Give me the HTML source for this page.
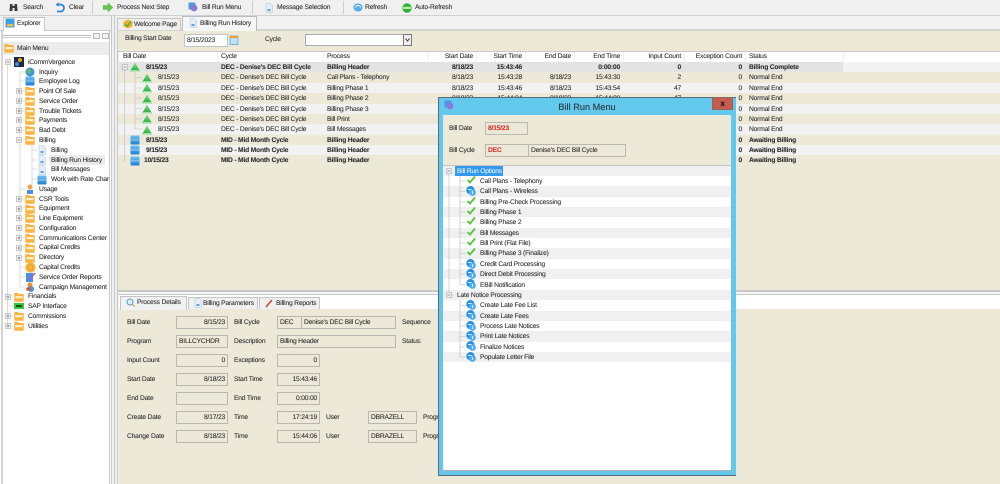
<!DOCTYPE html>
<html><head><meta charset="utf-8"><title>Bill Run History</title>
<style>
html,body{margin:0;padding:0;background:#f0f0f0}
#p{position:relative;width:1000px;height:484px;overflow:hidden;background:#f0f0f0;font-family:"Liberation Sans",sans-serif;font-size:6.7px;letter-spacing:-.19px;color:#2c2c2c;text-rendering:geometricPrecision;text-shadow:0 0 .4px rgba(40,40,40,.35)}
#p div,#p svg.i{position:absolute}
.t{line-height:10px;height:10px;white-space:nowrap;margin-top:1px}
.b{font-weight:bold}
.bx{background:#ece9d8;box-sizing:border-box;border:1px solid #b9b8b0;height:13px;line-height:11px;padding:0 2px;white-space:nowrap}
.rt{text-align:right}
.r{left:0;width:1000px;height:10.38px;line-height:10.38px;white-space:nowrap;clip-path:inset(0 0 0 118px)}
.r span{position:absolute;top:1px}
.o{background:#ece9d8}.w{background:#f2f2f2}
.ca{left:221px}.cb{left:327px}.cc{right:527px}.cd{right:478px}.ce{right:429px}.cf{right:380px}.cg{right:319px}.ch{right:258px}.ci{left:749px}
.hd{top:52px;height:10px;line-height:10px;background:#fff;margin-top:0}
.tab{background:#f0f0f0;border:1px solid #c4c4c4;border-bottom:0;box-sizing:border-box}
.m{left:443px;width:288px;height:10.35px;line-height:10.35px;white-space:nowrap}
.g{background:#f0f0f0}
.m span{position:absolute;left:37px;top:1px}
</style></head><body><div id="p">
<svg width="0" height="0" style="position:absolute"><defs>
<linearGradient id="gt" x1="0" y1="0" x2="0" y2="1"><stop offset="0" stop-color="#8fe08f"/><stop offset="1" stop-color="#27b042"/></linearGradient>
<linearGradient id="gb" x1="0" y1="0" x2="0" y2="1"><stop offset="0" stop-color="#6fc0f5"/><stop offset="1" stop-color="#1f7fd0"/></linearGradient>
<symbol id="tri" viewBox="0 0 10 10"><path d="M5 .5 9.500 8.500H.5Z" fill="url(#gt)"/><rect x="0" y="8" width="10" height="1.500" fill="#9adf9a"/></symbol>
<symbol id="sq" viewBox="0 0 10 10"><rect x=".5" y=".5" width="9" height="9" rx="1" fill="url(#gb)"/><path d="M1 5h8" stroke="#bfe3fb" stroke-width=".7"/></symbol>
<symbol id="chk" viewBox="0 0 10 10"><path d="M1.500 5 4 7.500 9 1.500" fill="none" stroke="#56c43c" stroke-width="1.900"/></symbol>
<symbol id="gr" viewBox="0 0 10 10"><circle cx="4.500" cy="4.200" r="4.200" fill="#2a90e0"/><circle cx="6.500" cy="6.500" r="3.400" fill="#52aef0"/><path d="M2 3.500h3.500M6.500 5v3" stroke="#d8f0ff" stroke-width="1"/></symbol>
<symbol id="fo" viewBox="0 0 10 10"><path d="M.3 1h3.700l1 1h4.700v7.700H.3Z" fill="#f8b444"/><rect x="1.500" y="4" width="7" height="2.200" fill="#fff0c8"/></symbol>
<symbol id="do" viewBox="0 0 10 10"><path d="M2 .5h4.500L8.500 2.500v7H2Z" fill="#e4eef8" stroke="#b0c4d8" stroke-width=".5"/><rect x="3.500" y="6" width="3" height="2" fill="#5aa4e4"/></symbol>
<symbol id="pl" viewBox="0 0 6 6"><rect x=".5" y=".5" width="5" height="5" fill="#f4f4f4" stroke="#aaa" stroke-width=".6"/><path d="M1.500 3h3M3 1.500v3" stroke="#555" stroke-width=".6"/></symbol>
<symbol id="mi" viewBox="0 0 6 6"><rect x=".5" y=".5" width="5" height="5" fill="#f4f4f4" stroke="#aaa" stroke-width=".6"/><path d="M1.500 3h3" stroke="#555" stroke-width=".6"/></symbol>
</defs></svg>

<!-- toolbar -->
<div style="left:0;top:15px;width:1000px;height:1px;background:#d0d0d0"></div>
<div style="left:92px;top:1px;width:1px;height:13px;background:#ccc"></div>
<div style="left:252px;top:1px;width:1px;height:13px;background:#ccc"></div>
<div style="left:343px;top:1px;width:1px;height:13px;background:#ccc"></div>
<svg class="i" style="left:9px;top:3px" width="9" height="9" viewBox="0 0 9 9"><path d="M1 1h2.500v7H0.500ZM5.500 1H8l.6 7H5.500ZM3.500 3h2v2h-2Z" fill="#3a3a3a"/></svg>
<div class="t" style="left:23px;top:2px">Search</div>
<svg class="i" style="left:55px;top:2px" width="10" height="11" viewBox="0 0 10 11"><path d="M3 2.500h2.500a3.400 3.400 0 0 1 0 7H2" fill="none" stroke="#2a86d8" stroke-width="1.800"/><path d="M3.600 .3v4.600L.6 2.600Z" fill="#2a86d8"/></svg>
<div class="t" style="left:69px;top:2px">Clear</div>
<svg class="i" style="left:103px;top:3px" width="10" height="9" viewBox="0 0 10 9"><path d="M0 2.500h5V0l5 4.500L5 9V6.500H0Z" fill="#62c84a" stroke="#4aa838" stroke-width=".4"/></svg>
<div class="t" style="left:117px;top:2px">Process Next Step</div>
<svg class="i" style="left:188px;top:2px" width="10" height="10" viewBox="0 0 10 10"><rect x=".5" y=".5" width="7" height="7" rx="1" fill="#4a9ae0"/><circle cx="6" cy="6" r="3.400" fill="#8a78d8"/></svg>
<div class="t" style="left:202px;top:2px">Bill Run Menu</div>
<svg class="i" style="left:264px;top:3px" width="10" height="10"><use href="#do"/></svg>
<div class="t" style="left:277px;top:2px">Message Selection</div>
<svg class="i" style="left:353px;top:3px" width="10" height="9" viewBox="0 0 10 9"><ellipse cx="5" cy="4.500" rx="4.600" ry="4" fill="#5aaee6"/><path d="M2.500 4.500a2.500 2 0 0 1 5 0" fill="none" stroke="#fff" stroke-width="1"/></svg>
<div class="t" style="left:365px;top:2px">Refresh</div>
<svg class="i" style="left:402px;top:3px" width="10" height="10" viewBox="0 0 10 10"><circle cx="5" cy="5" r="4.700" fill="#2cb434"/><rect x="1" y="3.800" width="8" height="2.200" fill="#b6eca8"/></svg>
<div class="t" style="left:415px;top:2px">Auto-Refresh</div>

<!-- left panel -->
<div style="left:0;top:30px;width:111px;height:454px;background:#fff"></div>
<div style="left:1px;top:30px;width:2px;height:454px;background:#d4d4d4"></div>
<div style="left:109px;top:30px;width:1px;height:454px;background:#c8c8c8"></div>
<div style="left:0;top:30px;width:111px;height:1px;background:#c8c8c8"></div>
<div style="left:3px;top:17px;width:42px;height:14px;background:#fff;border:1px solid #c8c8c8;border-bottom:0;box-sizing:border-box"></div>
<svg class="i" style="left:5px;top:18px" width="10" height="10" viewBox="0 0 10 10"><rect x=".5" y=".5" width="9" height="9" fill="#3fa0e4"/><path d="M2 6h6v2.500H2Z" fill="#f6b84b"/></svg>
<div class="t" style="left:17px;top:18px">Explorer</div>
<div style="left:3px;top:35px;width:88px;height:1px;background:#bbb"></div>
<div style="left:3px;top:37px;width:88px;height:1px;background:#ccc"></div>
<div style="left:93px;top:33px;width:7px;height:6px;border:1px solid #bbb;box-sizing:border-box;background:#f0f0f0"></div>
<div style="left:102px;top:33px;width:7px;height:6px;border:1px solid #bbb;box-sizing:border-box;background:#f0f0f0"></div>
<div style="left:3px;top:42px;width:106px;height:13px;background:#ececec"></div>
<svg class="i" style="left:4px;top:43px" width="10" height="10"><use href="#fo"/></svg>
<div class="t" style="left:17px;top:43px">Main Menu</div>

<svg class="i" style="left:0;top:55px" width="110" height="290" fill="none" stroke="#c4c4c4" stroke-width=".6">
<path d="M7.500 10V271M20 17V232M32 90V130M20 17h6M20 26h6M20 36h6M20 46h6M20 56h6M20 65h6M20 75h6M20 85h6M32 95h5M32 105h5M32 114h5M32 124h5M20 134h6M20 144h6M20 153h6M20 163h6M20 173h6M20 183h6M20 192h6M20 202h6M20 212h6M20 222h6M20 232h6M7.500 241h6M7.500 251h6M7.500 261h6M7.500 271h6"/>
</svg>
<svg class="i" style="left:5px;top:59px" width="6" height="6"><use href="#mi"/></svg>
<svg class="i" style="left:14px;top:57px" width="10" height="10" viewBox="0 0 10 10"><rect width="10" height="10" fill="#1c2a4a"/><circle cx="6" cy="3" r="2" fill="#f0a020"/><circle cx="3" cy="7" r="2" fill="#4a90d8"/></svg>
<div class="t" style="left:28px;top:56.500px">iCommVergence</div>

<svg class="i" style="left:25px;top:67px" width="10" height="10" viewBox="0 0 10 10"><circle cx="5" cy="5" r="4.500" fill="#3f9ad0"/><path d="M2 3 5 2 6 5 3 7Z" fill="#6cc04a"/></svg>
<div class="t" style="left:39px;top:66.500px">Inquiry</div>
<svg class="i" style="left:25px;top:76px" width="10" height="10"><use href="#sq"/></svg>
<div class="t" style="left:39px;top:76px">Employee Log</div>

<svg class="i" style="left:16px;top:88px" width="6" height="6"><use href="#pl"/></svg><svg class="i" style="left:25px;top:86px" width="10" height="10"><use href="#fo"/></svg><div class="t" style="left:39px;top:86px">Point Of Sale</div>
<svg class="i" style="left:16px;top:98px" width="6" height="6"><use href="#pl"/></svg><svg class="i" style="left:25px;top:96px" width="10" height="10"><use href="#fo"/></svg><div class="t" style="left:39px;top:95.500px">Service Order</div>
<svg class="i" style="left:16px;top:108px" width="6" height="6"><use href="#pl"/></svg><svg class="i" style="left:25px;top:106px" width="10" height="10"><use href="#fo"/></svg><div class="t" style="left:39px;top:105.500px">Trouble Tickets</div>
<svg class="i" style="left:16px;top:117px" width="6" height="6"><use href="#pl"/></svg><svg class="i" style="left:25px;top:115px" width="10" height="10"><use href="#fo"/></svg><div class="t" style="left:39px;top:115px">Payments</div>
<svg class="i" style="left:16px;top:127px" width="6" height="6"><use href="#pl"/></svg><svg class="i" style="left:25px;top:125px" width="10" height="10"><use href="#fo"/></svg><div class="t" style="left:39px;top:125px">Bad Debt</div>
<svg class="i" style="left:16px;top:137px" width="6" height="6"><use href="#mi"/></svg><svg class="i" style="left:25px;top:135px" width="10" height="10"><use href="#fo"/></svg><div class="t" style="left:39px;top:135px">Billing</div>
<svg class="i" style="left:37px;top:145px" width="10" height="10"><use href="#do"/></svg><div class="t" style="left:51px;top:144.500px">Billing</div>
<div style="left:49px;top:155px;width:56px;height:10px;background:#ececec"></div>
<svg class="i" style="left:37px;top:155px" width="10" height="10"><use href="#do"/></svg><div class="t" style="left:51px;top:154.500px">Billing Run History</div>
<svg class="i" style="left:37px;top:165px" width="10" height="10"><use href="#do"/></svg><div class="t" style="left:51px;top:164px">Bill Messages</div>
<svg class="i" style="left:37px;top:175px" width="10" height="10"><use href="#sq"/></svg><div class="t" style="left:51px;top:174px;width:58px;overflow:hidden">Work with Rate Changes</div>
<svg class="i" style="left:25px;top:184px" width="10" height="10" viewBox="0 0 10 10"><circle cx="5" cy="3" r="2.500" fill="#f0a040"/><path d="M2 6h6v4H2Z" fill="#4a90d8"/></svg><div class="t" style="left:39px;top:184px">Usage</div>
<svg class="i" style="left:16px;top:196px" width="6" height="6"><use href="#pl"/></svg><svg class="i" style="left:25px;top:194px" width="10" height="10"><use href="#fo"/></svg><div class="t" style="left:39px;top:193.500px">CSR Tools</div>
<svg class="i" style="left:16px;top:206px" width="6" height="6"><use href="#pl"/></svg><svg class="i" style="left:25px;top:204px" width="10" height="10"><use href="#fo"/></svg><div class="t" style="left:39px;top:203px">Equipment</div>
<svg class="i" style="left:16px;top:215px" width="6" height="6"><use href="#pl"/></svg><svg class="i" style="left:25px;top:213px" width="10" height="10"><use href="#fo"/></svg><div class="t" style="left:39px;top:213px">Line Equipment</div>
<svg class="i" style="left:16px;top:225px" width="6" height="6"><use href="#pl"/></svg><svg class="i" style="left:25px;top:223px" width="10" height="10"><use href="#fo"/></svg><div class="t" style="left:39px;top:222.500px">Configuration</div>
<svg class="i" style="left:16px;top:235px" width="6" height="6"><use href="#pl"/></svg><svg class="i" style="left:25px;top:233px" width="10" height="10"><use href="#fo"/></svg><div class="t" style="left:39px;top:232.500px">Communications Center</div>
<svg class="i" style="left:16px;top:245px" width="6" height="6"><use href="#pl"/></svg><svg class="i" style="left:25px;top:243px" width="10" height="10"><use href="#fo"/></svg><div class="t" style="left:39px;top:242px">Capital Credits</div>
<svg class="i" style="left:16px;top:255px" width="6" height="6"><use href="#pl"/></svg><svg class="i" style="left:25px;top:253px" width="10" height="10"><use href="#fo"/></svg><div class="t" style="left:39px;top:252px">Directory</div>
<svg class="i" style="left:25px;top:262px" width="11" height="11" viewBox="0 0 10 10"><circle cx="5" cy="5" r="4.700" fill="#f5b83c"/><circle cx="5" cy="5" r="2.500" fill="none" stroke="#e89020" stroke-width=".7"/></svg><div class="t" style="left:39px;top:262px">Capital Credits</div>
<svg class="i" style="left:26px;top:272px" width="10" height="10" viewBox="0 0 10 10"><rect x="0" y="1" width="7" height="9" fill="#4a90e0"/><path d="M3 8 9 1" stroke="#9a60d0" stroke-width="1.600"/></svg><div class="t" style="left:39px;top:271.500px">Service Order Reports</div>
<svg class="i" style="left:25px;top:282px" width="10" height="10" viewBox="0 0 10 10"><circle cx="5" cy="3" r="2.600" fill="#e8902c"/><circle cx="6" cy="7" r="3" fill="#5a8ec8"/><circle cx="3" cy="7" r="1.800" fill="#d85030"/></svg><div class="t" style="left:39px;top:281.500px;width:70px;overflow:hidden">Campaign Management</div>

<svg class="i" style="left:5px;top:294px" width="6" height="6"><use href="#pl"/></svg><svg class="i" style="left:14px;top:292px" width="10" height="10"><use href="#fo"/></svg><div class="t" style="left:28px;top:291px">Financials</div>
<div style="left:14px;top:303px;width:10px;height:6px;background:#3cc43c"></div><div style="left:16px;top:305px;width:6px;height:2px;background:#0a5a0a"></div><div class="t" style="left:28px;top:301px">SAP Interface</div>
<svg class="i" style="left:5px;top:313px" width="6" height="6"><use href="#pl"/></svg><svg class="i" style="left:14px;top:311px" width="10" height="10"><use href="#fo"/></svg><div class="t" style="left:28px;top:311px">Commissions</div>
<svg class="i" style="left:5px;top:323px" width="6" height="6"><use href="#pl"/></svg><svg class="i" style="left:14px;top:321px" width="10" height="10"><use href="#fo"/></svg><div class="t" style="left:28px;top:321px">Utilities</div>

<!-- splitter -->
<div style="left:111px;top:16px;width:1px;height:468px;background:#c8c8c8"></div>
<div style="left:114px;top:16px;width:1px;height:468px;background:#c8c8c8"></div>
<div style="left:117px;top:30px;width:1px;height:454px;background:#c8c8c8"></div>

<!-- top tabs -->
<div style="left:118px;top:17px;width:882px;height:13px;background:#f2f2f2"></div>
<div style="left:118px;top:29px;width:882px;height:2px;background:#d4d4d4"></div>
<div class="tab" style="left:117px;top:18px;width:64px;height:12px"></div>
<div class="tab" style="left:182px;top:16px;width:75px;height:15px;background:#f6f6f6;border-color:#bbb"></div>
<svg class="i" style="left:123px;top:19px" width="10" height="10" viewBox="0 0 10 10"><path d="M.5 2.500 5 .5l4.500 2v5L5 9.500.5 7.500Z" fill="#f0b030"/><path d="M2 5 4.500 7 8 2.500" fill="none" stroke="#4ab040" stroke-width="1.500"/></svg>
<div class="t" style="left:134px;top:18.500px">Welcome Page</div>
<svg class="i" style="left:188px;top:18px" width="10" height="10"><use href="#do"/></svg>
<div class="t" style="left:200px;top:17.500px">Billing Run History</div>

<!-- main area -->
<div style="left:118px;top:31px;width:882px;height:20px;background:#ece9d8"></div>
<div class="t" style="left:125px;top:33px">Billing Start Date</div>
<div style="left:184px;top:34px;width:44px;height:13px;background:#fff;border:1px solid #c4c4c4;box-sizing:border-box;line-height:11px;padding-left:2px">8/15/2023</div>
<svg class="i" style="left:229px;top:35px" width="10" height="10" viewBox="0 0 10 10"><rect x="1" y="1" width="8" height="8.500" fill="#bfe0f5" stroke="#4aa0d8" stroke-width=".7"/><rect x="1" y="1" width="8" height="2" fill="#f0a030"/></svg>
<div class="t" style="left:265px;top:34px">Cycle</div>
<div style="left:305px;top:34px;width:107px;height:12px;background:#fff;border:1px solid #aaa;box-sizing:border-box"></div>
<div style="left:403px;top:34px;width:9px;height:12px;background:#eee;border:1px solid #777;box-sizing:border-box"></div>
<svg class="i" style="left:405px;top:38px" width="5" height="4" viewBox="0 0 5 4"><path d="M.5 .5 2.500 3 4.500 .5" fill="none" stroke="#333" stroke-width="1"/></svg>

<!-- grid -->
<div style="left:118px;top:51px;width:882px;height:240px;background:#ece9d8"></div>
<div style="left:118px;top:51px;width:882px;height:1px;background:#c8c8c8"></div>
<div style="left:119px;top:52px;width:881px;height:10px;background:#f0f0f0"></div>
<div class="t hd" style="left:119px;width:98px;padding-left:4px;box-sizing:border-box">Bill Date</div>
<div class="t hd" style="left:218px;width:105px;padding-left:3px;box-sizing:border-box">Cycle</div>
<div class="t hd" style="left:324px;width:104px;padding-left:3px;box-sizing:border-box">Process</div>
<div class="t hd rt" style="left:429px;width:47px;padding-right:3px;box-sizing:border-box">Start Date</div>
<div class="t hd rt" style="left:477px;width:48px;padding-right:3px;box-sizing:border-box">Start Time</div>
<div class="t hd rt" style="left:526px;width:48px;padding-right:3px;box-sizing:border-box">End Date</div>
<div class="t hd rt" style="left:575px;width:48px;padding-right:3px;box-sizing:border-box">End Time</div>
<div class="t hd rt" style="left:624px;width:60px;padding-right:3px;box-sizing:border-box">Input Count</div>
<div class="t hd rt" style="left:685px;width:60px;padding-right:3px;box-sizing:border-box">Exception Count</div>
<div class="t hd" style="left:746px;width:97px;padding-left:3px;box-sizing:border-box">Status</div>
<div class="t hd" style="left:844px;width:156px"></div>

<div class="r w" style="top:62px;height:10.400px"></div>
<div class="r" style="top:62px;height:10.400px;left:119px;width:724px;background:#e3e3e3;clip-path:none"></div>
<div class="r b" style="top:62px"><span style="left:146px">8/15/23</span><span class="ca">DEC - Denise's DEC Bill Cycle</span><span class="cb">Billing Header</span><span class="cc">8/18/23</span><span class="cd">15:43:46</span><span class="cf">0:00:00</span><span class="cg">0</span><span class="ch">0</span><span class="ci">Billing Complete</span></div>
<div class="r o" style="top:72.380px"><span style="left:158px">8/15/23</span><span class="ca">DEC - Denise's DEC Bill Cycle</span><span class="cb">Call Plans - Telephony</span><span class="cc">8/18/23</span><span class="cd">15:43:28</span><span class="ce">8/18/23</span><span class="cf">15:43:30</span><span class="cg">2</span><span class="ch">0</span><span class="ci">Normal End</span></div>
<div class="r w" style="top:82.760px"><span style="left:158px">8/15/23</span><span class="ca">DEC - Denise's DEC Bill Cycle</span><span class="cb">Billing Phase 1</span><span class="cc">8/18/23</span><span class="cd">15:43:46</span><span class="ce">8/18/23</span><span class="cf">15:43:54</span><span class="cg">47</span><span class="ch">0</span><span class="ci">Normal End</span></div>
<div class="r o" style="top:93.140px"><span style="left:158px">8/15/23</span><span class="ca">DEC - Denise's DEC Bill Cycle</span><span class="cb">Billing Phase 2</span><span class="cc">8/18/23</span><span class="cd">15:44:04</span><span class="ce">8/18/23</span><span class="cf">15:44:09</span><span class="cg">47</span><span class="ch">0</span><span class="ci">Normal End</span></div>
<div class="r w" style="top:103.520px"><span style="left:158px">8/15/23</span><span class="ca">DEC - Denise's DEC Bill Cycle</span><span class="cb">Billing Phase 3</span><span class="ch">0</span><span class="ci">Normal End</span></div>
<div class="r o" style="top:113.900px"><span style="left:158px">8/15/23</span><span class="ca">DEC - Denise's DEC Bill Cycle</span><span class="cb">Bill Print</span><span class="ch">0</span><span class="ci">Normal End</span></div>
<div class="r w" style="top:124.280px"><span style="left:158px">8/15/23</span><span class="ca">DEC - Denise's DEC Bill Cycle</span><span class="cb">Bill Messages</span><span class="ch">0</span><span class="ci">Normal End</span></div>
<div class="r o b" style="top:134.660px"><span style="left:146px">8/15/23</span><span class="ca">MID - Mid Month Cycle</span><span class="cb">Billing Header</span><span class="ch">0</span><span class="ci">Awaiting Billing</span></div>
<div class="r w b" style="top:145.040px"><span style="left:146px">9/15/23</span><span class="ca">MID - Mid Month Cycle</span><span class="cb">Billing Header</span><span class="ch">0</span><span class="ci">Awaiting Billing</span></div>
<div class="r o b" style="top:155.420px"><span style="left:144px">10/15/23</span><span class="ca">MID - Mid Month Cycle</span><span class="cb">Billing Header</span><span class="ch">0</span><span class="ci">Awaiting Billing</span></div>

<svg class="i" style="left:119px;top:62px" width="30" height="100" fill="none" stroke="#bdbdbd" stroke-width=".6"><path d="M5.500 8V100M16 10V67M16 15.500h7M16 26h7M16 36h7M16 46.500h7M16 57h7M16 67h7"/></svg>
<svg class="i" style="left:122px;top:64px" width="6" height="6"><use href="#mi"/></svg>
<svg class="i" style="left:130px;top:62px" width="10" height="10"><use href="#tri"/></svg>
<svg class="i" style="left:142px;top:73px" width="10" height="10"><use href="#tri"/></svg>
<svg class="i" style="left:142px;top:83px" width="10" height="10"><use href="#tri"/></svg>
<svg class="i" style="left:142px;top:93.500px" width="10" height="10"><use href="#tri"/></svg>
<svg class="i" style="left:142px;top:104px" width="10" height="10"><use href="#tri"/></svg>
<svg class="i" style="left:142px;top:114px" width="10" height="10"><use href="#tri"/></svg>
<svg class="i" style="left:142px;top:124.500px" width="10" height="10"><use href="#tri"/></svg>
<svg class="i" style="left:130px;top:135px" width="10" height="10"><use href="#sq"/></svg>
<svg class="i" style="left:130px;top:145px" width="10" height="10"><use href="#sq"/></svg>
<svg class="i" style="left:130px;top:155.500px" width="10" height="10"><use href="#sq"/></svg>

<!-- bottom panel -->
<div style="left:118px;top:290px;width:882px;height:2px;background:#c8c8c8"></div>
<div style="left:118px;top:292px;width:882px;height:2px;background:#f4f4f4"></div>
<div style="left:118px;top:294px;width:882px;height:1px;background:#c8c8c8"></div>
<div style="left:119px;top:295px;width:881px;height:15px;background:#fff"></div>
<div style="left:119px;top:309px;width:881px;height:175px;background:#ece9d8"></div>
<div class="tab" style="left:120px;top:296px;width:67px;height:14px;background:#f2f2f2;border-bottom:0"></div>
<div class="tab" style="left:188px;top:297px;width:70px;height:12px"></div>
<div class="tab" style="left:259px;top:297px;width:61px;height:12px"></div>
<svg class="i" style="left:126px;top:298px" width="9" height="9" viewBox="0 0 9 9"><circle cx="4" cy="4" r="3" fill="#dff0fb" stroke="#5a9ad0" stroke-width="1"/><path d="M6 6 8.500 8.500" stroke="#d89040" stroke-width="1.200"/></svg>
<div class="t" style="left:137px;top:296.500px">Process Details</div>
<svg class="i" style="left:193px;top:298px" width="10" height="10"><use href="#do"/></svg>
<div class="t" style="left:203px;top:298px">Billing Parameters</div>
<svg class="i" style="left:265px;top:299px" width="8" height="9" viewBox="0 0 8 9"><rect width="7" height="9" fill="#eee"/><path d="M1 8 7 1" stroke="#d84030" stroke-width="1.500"/></svg>
<div class="t" style="left:276px;top:298px">Billing Reports</div>

<div class="t" style="left:127px;top:317px">Bill Date</div><div class="bx rt" style="left:176px;top:316px;width:52px">8/15/23</div>
<div class="t" style="left:234px;top:317px">Bill Cycle</div><div class="bx" style="left:277px;top:316px;width:25px">DEC</div><div class="bx" style="left:301px;top:316px;width:95px">Denise's DEC Bill Cycle</div><div class="t" style="left:402px;top:317px">Sequence</div>
<div class="t" style="left:127px;top:336px">Program</div><div class="bx" style="left:176px;top:335px;width:52px">BILLCYCHDR</div>
<div class="t" style="left:234px;top:336px">Description</div><div class="bx" style="left:277px;top:335px;width:119px">Billing Header</div><div class="t" style="left:402px;top:336px">Status:</div>
<div class="t" style="left:127px;top:355px">Input Count</div><div class="bx rt" style="left:176px;top:354px;width:52px">0</div>
<div class="t" style="left:234px;top:355px">Exceptions</div><div class="bx rt" style="left:277px;top:354px;width:43px">0</div>
<div class="t" style="left:127px;top:374px">Start Date</div><div class="bx rt" style="left:176px;top:373px;width:52px">8/18/23</div>
<div class="t" style="left:234px;top:374px">Start Time</div><div class="bx rt" style="left:277px;top:373px;width:43px">15:43:46</div>
<div class="t" style="left:127px;top:393px">End Date</div><div class="bx" style="left:176px;top:392px;width:52px"></div>
<div class="t" style="left:234px;top:393px">End Time</div><div class="bx rt" style="left:277px;top:392px;width:43px">0:00:00</div>
<div class="t" style="left:127px;top:412px">Create Date</div><div class="bx rt" style="left:176px;top:411px;width:52px">8/17/23</div>
<div class="t" style="left:234px;top:412px">Time</div><div class="bx rt" style="left:277px;top:411px;width:43px">17:24:19</div>
<div class="t" style="left:326px;top:412px">User</div><div class="bx" style="left:368px;top:411px;width:49px">DBRAZELL</div><div class="t" style="left:423px;top:412px">Program</div>
<div class="t" style="left:127px;top:431px">Change Date</div><div class="bx rt" style="left:176px;top:430px;width:52px">8/18/23</div>
<div class="t" style="left:234px;top:431px">Time</div><div class="bx rt" style="left:277px;top:430px;width:43px">15:44:06</div>
<div class="t" style="left:326px;top:431px">User</div><div class="bx" style="left:368px;top:430px;width:49px">DBRAZELL</div><div class="t" style="left:423px;top:431px">Program</div>

<!-- dialog -->
<div style="left:438px;top:97px;width:298px;height:379px;background:#62c8ec;border:1px solid #5a6a78;box-sizing:border-box;border-right:0"></div>
<svg class="i" style="left:444px;top:100px" width="10" height="10" viewBox="0 0 10 10"><rect x=".5" y=".5" width="7" height="7" rx="1" fill="#4a9ae0"/><circle cx="6" cy="6" r="3.400" fill="#8a78d8"/></svg>
<div style="left:438px;top:101px;width:298px;text-align:center;font-size:9.200px;letter-spacing:0;line-height:12px;color:#26323a">Bill Run Menu</div>
<div style="left:712px;top:97px;width:21px;height:13px;background:#c75b4f;border:1px solid #8a6a60;box-sizing:border-box;text-align:center;font-weight:bold;font-size:8px;line-height:11px;color:#111">x</div>
<div style="left:443px;top:115px;width:288px;height:50px;background:#ece9d8"></div>
<div class="t" style="left:449px;top:123px">Bill Date</div>
<div class="bx b" style="left:485px;top:122px;width:43px;color:#e8322c">8/15/23</div>
<div class="t" style="left:449px;top:145px">Bill Cycle</div>
<div class="bx b" style="left:485px;top:144px;width:44px;color:#e8322c">DEC</div>
<div class="bx" style="left:528px;top:144px;width:98px">Denise's DEC Bill Cycle</div>
<div style="left:443px;top:165px;width:288px;height:305.500px;background:#fff;border-top:1px solid #c4c4c4;border-bottom:1px solid #b0b0b0;box-sizing:border-box"></div>

<div class="m g" style="top:166px;height:10px"></div>
<div style="left:455px;top:166px;width:48px;height:10px;background:#3399ee;color:#fff;line-height:11px;padding-left:2px;box-sizing:border-box;white-space:nowrap;text-shadow:none">Bill Run Options</div>
<div class="m" style="top:176px"><span>Call Plans - Telephony</span></div>
<div class="m g" style="top:186.350px"><span>Call Plans - Wireless</span></div>
<div class="m" style="top:196.700px"><span>Billing Pre-Check Processing</span></div>
<div class="m g" style="top:207.050px"><span>Billing Phase 1</span></div>
<div class="m" style="top:217.400px"><span>Billing Phase 2</span></div>
<div class="m g" style="top:227.750px"><span>Bill Messages</span></div>
<div class="m" style="top:238.100px"><span>Bill Print (Flat File)</span></div>
<div class="m g" style="top:248.450px"><span>Billing Phase 3 (Finalize)</span></div>
<div class="m" style="top:258.800px"><span>Credit Card Processing</span></div>
<div class="m g" style="top:269.150px"><span>Direct Debit Processing</span></div>
<div class="m" style="top:279.500px"><span>EBill Notification</span></div>
<div class="m g" style="top:289.850px"><span style="left:14px">Late Notice Processing</span></div>
<div class="m" style="top:300.200px"><span>Create Late Fee List</span></div>
<div class="m g" style="top:310.550px"><span>Create Late Fees</span></div>
<div class="m" style="top:320.900px"><span>Process Late Notices</span></div>
<div class="m g" style="top:331.250px"><span>Print Late Notices</span></div>
<div class="m" style="top:341.600px"><span>Finalize Notices</span></div>
<div class="m g" style="top:351.950px"><span>Populate Letter File</span></div>

<svg class="i" style="left:443px;top:166px" width="30" height="195" fill="none" stroke="#b8b8b8" stroke-width=".6"><path d="M6 5V129M17 10V119M17 15h6M17 25.500h6M17 36h6M17 46h6M17 56.500h6M17 67h6M17 77h6M17 87.500h6M17 98h6M17 108h6M17 118.500h6M6 129h5M17 134V191M17 139.500h6M17 150h6M17 160h6M17 170.500h6M17 181h6M17 191h6"/></svg>
<svg class="i" style="left:446px;top:168px" width="6" height="6"><use href="#mi"/></svg>
<svg class="i" style="left:446px;top:292px" width="6" height="6"><use href="#mi"/></svg>
<svg class="i" style="left:466px;top:175px" width="10" height="10"><use href="#chk"/></svg>
<svg class="i" style="left:466px;top:186px" width="10" height="10"><use href="#gr"/></svg>
<svg class="i" style="left:466px;top:196px" width="10" height="10"><use href="#chk"/></svg>
<svg class="i" style="left:466px;top:206px" width="10" height="10"><use href="#chk"/></svg>
<svg class="i" style="left:466px;top:216px" width="10" height="10"><use href="#chk"/></svg>
<svg class="i" style="left:466px;top:227px" width="10" height="10"><use href="#chk"/></svg>
<svg class="i" style="left:466px;top:237px" width="10" height="10"><use href="#chk"/></svg>
<svg class="i" style="left:466px;top:247px" width="10" height="10"><use href="#chk"/></svg>
<svg class="i" style="left:466px;top:259px" width="10" height="10"><use href="#gr"/></svg>
<svg class="i" style="left:466px;top:269px" width="10" height="10"><use href="#gr"/></svg>
<svg class="i" style="left:466px;top:279px" width="10" height="10"><use href="#gr"/></svg>
<svg class="i" style="left:466px;top:300px" width="10" height="10"><use href="#gr"/></svg>
<svg class="i" style="left:466px;top:310px" width="10" height="10"><use href="#gr"/></svg>
<svg class="i" style="left:466px;top:321px" width="10" height="10"><use href="#gr"/></svg>
<svg class="i" style="left:466px;top:331px" width="10" height="10"><use href="#gr"/></svg>
<svg class="i" style="left:466px;top:341px" width="10" height="10"><use href="#gr"/></svg>
<svg class="i" style="left:466px;top:352px" width="10" height="10"><use href="#gr"/></svg>
</div></body></html>
